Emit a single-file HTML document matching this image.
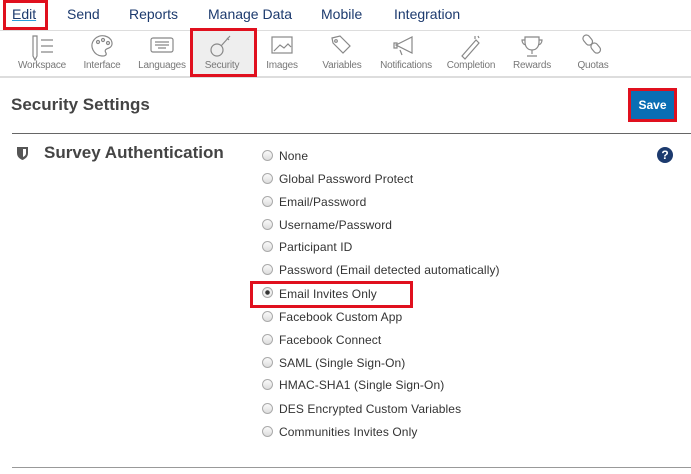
<!DOCTYPE html>
<html><head><style>
*{margin:0;padding:0;box-sizing:border-box}
body{width:691px;height:474px;background:#fff;font-family:"Liberation Sans",sans-serif;position:relative;overflow:hidden;color:#444}
.a{position:absolute;white-space:nowrap}
.nav{top:6px;font-size:14px;color:#1c3a6e}
.lab{top:60px;font-size:10px;color:#777;transform:translateX(-50%);letter-spacing:-0.2px}
.r{left:262px;width:11px;height:11px;border-radius:50%;border:1px solid #aaa;background:linear-gradient(#fafafa,#ddd)}
.rt{left:279px;font-size:12px;color:#333;letter-spacing:0.1px}
</style></head><body>
<div class="a" style="left:0;top:30px;width:691px;height:1px;background:#ddd"></div>
<div class="a" style="left:0;top:76px;width:691px;height:2px;background:#ddd"></div>
<div class="a nav" style="left:12px;text-decoration:underline;text-decoration-color:#29a0dc">Edit</div>
<div class="a" style="left:3px;top:0;width:45px;height:30px;border:3px solid #e0101e"></div>
<div class="a nav" style="left:67px">Send</div>
<div class="a nav" style="left:129px">Reports</div>
<div class="a nav" style="left:208px">Manage Data</div>
<div class="a nav" style="left:321px">Mobile</div>
<div class="a nav" style="left:394px">Integration</div>
<div class="a" style="left:190px;top:28px;width:67px;height:49px;background:#eee;border:3px solid #e0101e"></div>
<svg class="a" style="left:0;top:0" width="691" height="80" fill="none" stroke="#888" stroke-width="1.2">
<path d="M33 36v20l2 4 2-4V36zM41 40h12M41 46h12M41 52h12"/>
<path d="M93 50c-4-8 4-16 12-14 8 2 9 10 4 12-3 1-5 2-3 5 2 4-9 5-13-3z"/><circle cx="98" cy="42" r="1.5"/><circle cx="103" cy="40" r="1.5"/><circle cx="108" cy="43" r="1.5"/>
<rect x="151" y="38" width="22" height="14" rx="2"/><path d="M155 42h14M155 45h14M158 48h8"/>
<circle cx="217" cy="50" r="6"/><path d="M221 46l9-10M227 38l2 2"/>
<rect x="272" y="37" width="20" height="16"/><path d="M274 51l6-6 4 3 4-4 3 3"/>
<path d="M332 38l8-2 10 10-7 7-10-10z"/><circle cx="336" cy="41" r="1.3"/>
<path d="M396 45l16-8v16zM394 43h3v5h-3zM400 50l2 5"/>
<path d="M462 56l14-16 3 3-14 16zM475 36v3M478 36l1 2"/>
<path d="M525 37h14v5c0 5-3 8-7 8s-7-3-7-8zM532 50v4M527 56h10M525 40h-3c0 3 2 5 4 5M539 40h3c0 3-2 5-4 5"/>
<rect x="584" y="35" width="7" height="11" rx="3.5" transform="rotate(-40 587 40)"/><rect x="592" y="43" width="7" height="11" rx="3.5" transform="rotate(-40 595 48)"/>
</svg>
<div class="a lab" style="left:42px">Workspace</div>
<div class="a lab" style="left:102px">Interface</div>
<div class="a lab" style="left:162px">Languages</div>
<div class="a lab" style="left:222px">Security</div>
<div class="a lab" style="left:282px">Images</div>
<div class="a lab" style="left:342px">Variables</div>
<div class="a lab" style="left:406px">Notifications</div>
<div class="a lab" style="left:471px">Completion</div>
<div class="a lab" style="left:532px">Rewards</div>
<div class="a lab" style="left:593px">Quotas</div>
<div class="a" style="left:11px;top:95px;font-size:17px;font-weight:bold;color:#444">Security Settings</div>
<div class="a" style="left:628px;top:88px;width:49px;height:34px;border:3px solid #e0101e;background:#0a6eb4;color:#fff;font-size:12px;font-weight:bold;text-align:center;line-height:28px">Save</div>
<div class="a" style="left:12px;top:133px;width:679px;height:1px;background:#666"></div>
<svg class="a" style="left:17px;top:147px" width="11" height="13"><path d="M0 0h11v6c0 4-3 6-5.5 7C3 12 0 10 0 6z" fill="#555"/><path d="M6 2h3v4c0 2-1 3-3 4z" fill="#fff"/></svg>
<div class="a" style="left:44px;top:143px;font-size:17px;font-weight:bold;color:#444">Survey Authentication</div>
<div class="a" style="left:657px;top:147px;width:16px;height:16px;border-radius:50%;background:#1c3a6e;color:#fff;font-size:12px;font-weight:bold;text-align:center;line-height:16px">?</div>
<div class="a" style="left:250px;top:281px;width:163px;height:27px;border:3px solid #e0101e"></div>
<div class="a r" style="top:150px"></div><div class="a rt" style="top:149px">None</div>
<div class="a r" style="top:173px"></div><div class="a rt" style="top:172px">Global Password Protect</div>
<div class="a r" style="top:196px"></div><div class="a rt" style="top:195px">Email/Password</div>
<div class="a r" style="top:219px"></div><div class="a rt" style="top:218px">Username/Password</div>
<div class="a r" style="top:241px"></div><div class="a rt" style="top:240px">Participant ID</div>
<div class="a r" style="top:264px"></div><div class="a rt" style="top:263px">Password (Email detected automatically)</div>
<div class="a r" style="top:287px;background:radial-gradient(#333 30%,#eee 40%)"></div><div class="a rt" style="top:287px">Email Invites Only</div>
<div class="a r" style="top:311px"></div><div class="a rt" style="top:310px">Facebook Custom App</div>
<div class="a r" style="top:334px"></div><div class="a rt" style="top:333px">Facebook Connect</div>
<div class="a r" style="top:357px"></div><div class="a rt" style="top:356px">SAML (Single Sign-On)</div>
<div class="a r" style="top:379px"></div><div class="a rt" style="top:378px">HMAC-SHA1 (Single Sign-On)</div>
<div class="a r" style="top:403px"></div><div class="a rt" style="top:402px">DES Encrypted Custom Variables</div>
<div class="a r" style="top:426px"></div><div class="a rt" style="top:425px">Communities Invites Only</div>
<div class="a" style="left:12px;top:467px;width:679px;height:1px;background:#999"></div>
</body></html>
